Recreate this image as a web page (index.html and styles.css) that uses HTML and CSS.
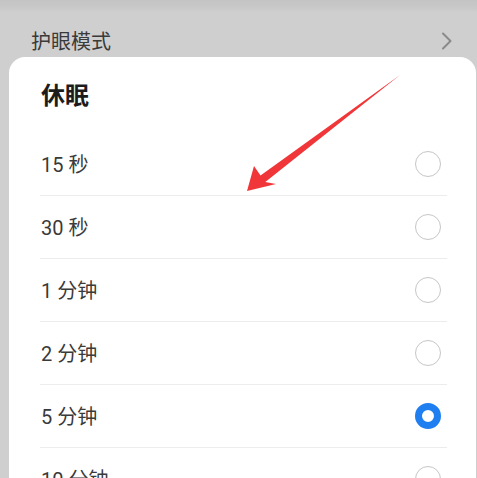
FILE: index.html
```html
<!DOCTYPE html>
<html lang="zh-CN">
<head>
<meta charset="utf-8">
<title>休眠</title>
<link rel="stylesheet" href="styles.css">
</head>
<body>
<div class="screen">
  <div class="setting-row">
    <span class="setting-label">护眼模式</span>
    <svg class="chevron" width="12" height="18" viewBox="0 0 12 18"><path d="M2 1.5 L9.5 9 L2 16.5" fill="none" stroke="#8a8a8a" stroke-width="2" stroke-linecap="round" stroke-linejoin="round"/></svg>
  </div>
  <div class="dialog">
    <div class="dialog-title">休眠</div>
    <ul class="options">
      <li class="option"><span class="option-label">15 秒</span><span class="radio"></span></li>
      <li class="option"><span class="option-label">30 秒</span><span class="radio"></span></li>
      <li class="option"><span class="option-label">1 分钟</span><span class="radio"></span></li>
      <li class="option"><span class="option-label">2 分钟</span><span class="radio"></span></li>
      <li class="option"><span class="option-label">5 分钟</span><span class="radio radio-on"></span></li>
      <li class="option"><span class="option-label">10 分钟</span><span class="radio"></span></li>
    </ul>
  </div>
  <svg class="arrow" width="477" height="478" viewBox="0 0 477 478">
    <polygon points="247,191 254,166 260.5,175.5 400,75 265.3,182 276,184" fill="#f03638"/>
  </svg>
</div>
</body>
</html>
```

FILE: styles.css
```css
html, body {
  margin: 0;
  padding: 0;
}
body {
  background: #cfcfcf;
  font-family: Roboto, "Noto Sans CJK SC", sans-serif;
  overflow: hidden;
}
.screen {
  position: relative;
  width: 477px;
  height: 478px;
  overflow: hidden;
  background: linear-gradient(to bottom, #c4c4c4 0px, #c9c9c9 8px, #cfcfcf 12px, #cfcfcf 100%);
}
.setting-row {
  height: 57px;
  box-sizing: border-box;
  padding: 30px 24px 0 31px;
  display: flex;
  align-items: flex-start;
  justify-content: space-between;
}
.setting-label {
  font-size: 20px;
  line-height: 24px;
  color: #3a3a3a;
}
.chevron {
  margin-top: 2px;
}
.dialog {
  margin-left: 9px;
  width: 467px;
  height: 421px;
  background: #ffffff;
  border-radius: 16px 16px 0 0;
}
.dialog-title {
  padding: 23px 0 0 32px;
  height: 53px;
  font-size: 24px;
  line-height: 32px;
  font-weight: 600;
  color: #1c1c1c;
}
.options {
  list-style: none;
  margin: 0;
  padding: 0 29px 0 31px;
}
.option {
  height: 62px;
  border-bottom: 1px solid #ececec;
  display: flex;
  align-items: center;
  justify-content: space-between;
  padding-left: 1px;
}
.option-label {
  font-size: 20px;
  line-height: 24px;
  padding-top: 2px;
  color: #3a3a3a;
}
.radio {
  width: 26px;
  height: 26px;
  box-sizing: border-box;
  border-radius: 50%;
  border: 1.6px solid #c6c6c6;
  margin-right: 6px;
}
.radio-on {
  border: 7px solid #1f7ff0;
}
.arrow {
  position: absolute;
  left: 0;
  top: 0;
}
```
